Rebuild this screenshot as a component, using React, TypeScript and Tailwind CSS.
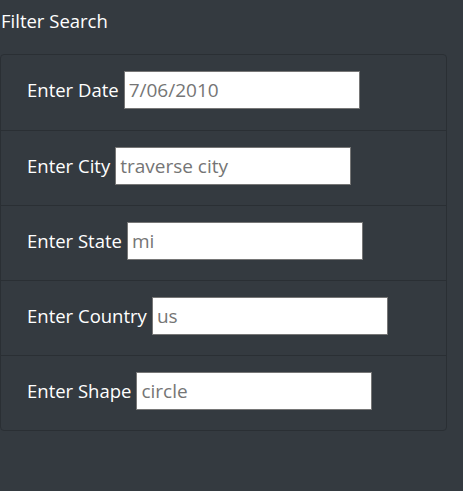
import React from "react";

const rows = [
  { label: "Enter Date", value: "7/06/2010" },
  { label: "Enter City", value: "traverse city" },
  { label: "Enter State", value: "mi" },
  { label: "Enter Country", value: "us" },
  { label: "Enter Shape", value: "circle" },
];

export default function App() {
  return (
    <div
      className="min-h-[491px] w-full bg-[#343a40] text-white"
      style={{ fontFamily: '"Open Sans", "Noto Sans", sans-serif' }}
    >
      <h5 className="pl-[1px] pt-[7px] text-[18.5px] leading-[27px] font-normal">Filter Search</h5>
      <ul className="mt-[20px] w-[447px] rounded-[4px] border border-[#2a2f34]">
        {rows.map((r, i) => (
          <li
            key={r.label}
            className={
              "flex items-center pl-[26px] pt-[16px] " +
              (i > 0 ? "border-t border-[#2a2f34] pb-[20px]" : "pb-[21px]")
            }
          >
            <label className="text-[18.5px] leading-[26px] whitespace-nowrap">{r.label}</label>
            <input
              readOnly
              placeholder={r.value}
              className="ml-[5px] h-[38px] w-[236px] border border-[#767676] bg-white px-[4px] text-[19px] text-[#757575] placeholder:text-[#757575] outline-none"
              style={{ fontFamily: '"Open Sans", "Noto Sans", sans-serif' }}
            />
          </li>
        ))}
      </ul>
    </div>
  );
}
